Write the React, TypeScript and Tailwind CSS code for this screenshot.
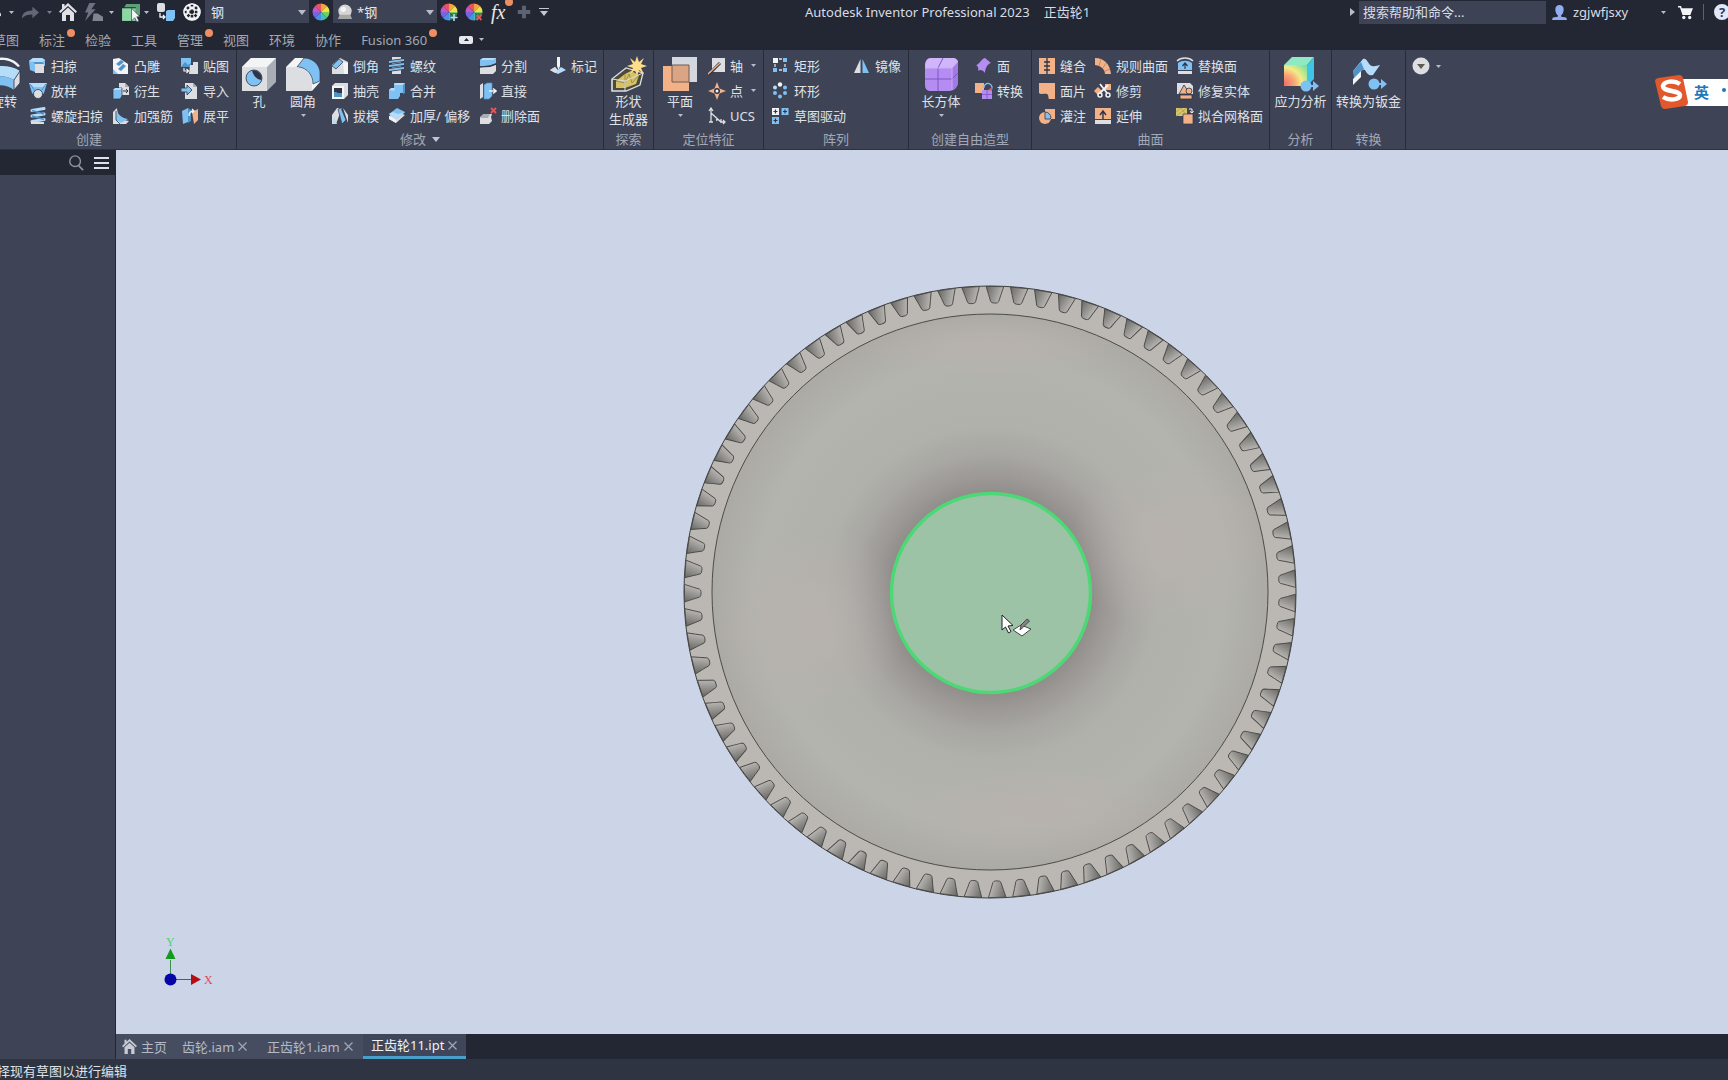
import React from "react";

type IconProps = { size?: number };
type Draw = React.ReactNode;

const B = "#7fc1f2";
const L = "#b5dcf8";
const D = "#4f93c9";
const G = "#dcdee2";
const W = "#f3f4f6";
const S = "#a9adb6";
const O = "#f3b187";
const P = "#b48cf2";
const K = "#2f3546";

function Svg({ children, size = 18, box = 18 }: { children: Draw; size?: number; box?: number }) {
  return (
    <svg width={size} height={size} viewBox={`0 0 ${box} ${box}`} fill="none" className="shrink-0" aria-hidden="true">
      {children}
    </svg>
  );
}

function Caret({ color = "#b9bdc8", wide = false }: { color?: string; wide?: boolean }) {
  return wide ? (
    <svg width="8" height="5" viewBox="0 0 8 5" className="shrink-0" aria-hidden="true">
      <path d="M0 0h8L4 5z" fill={color} />
    </svg>
  ) : (
    <svg width="5" height="3" viewBox="0 0 5 3" className="shrink-0" aria-hidden="true">
      <path d="M0 0h5L2.500 3z" fill={color} />
    </svg>
  );
}

/* ---------- small ribbon icons (18 x 18) ---------- */

const small: Record<string, Draw> = {
  sweep: (
    <>
      <path d="M0 4l4-3h9l3 2v6H6v6l-5-2z" fill={B} />
      <path d="M0 4l4-3h9l3 2-3 2H5z" fill={L} />
      <path d="M6 7h9v9H6z" fill={G} />
      <path d="M6 7l-2-2h9l2 2z" fill={D} />
    </>
  ),
  loft: (
    <>
      <path d="M0 1h18l-3 10-6 6-6-6z" fill={B} />
      <path d="M0 1h18l-4 4H5z" fill={L} />
      <circle cx="9" cy="12" r="4.500" fill={G} stroke={K} strokeWidth=".8" />
      <path d="M1 2l5 7M17 2l-5 7" stroke={D} />
    </>
  ),
  coil: (
    <>
      <path d="M3 3.500l12-2M3 9l12-2M3 14.500l12-2" stroke={L} strokeWidth="3" strokeLinecap="round" />
      <path d="M3 3.500l12 3.500M3 9l12 3.500" stroke={D} strokeWidth="1.500" />
      <path d="M2 16h13" stroke={G} strokeWidth="2" />
    </>
  ),
  emboss: (
    <>
      <path d="M1 2l6-1 9 6v10H1z" fill={W} />
      <path d="M4 7l5-4 3 2-5 4zM6 12l5-5 3 2-5 5z" fill={D} />
      <path d="M1 12l5 5H1z" fill={B} />
    </>
  ),
  derive: (
    <>
      <path d="M7 1h6l4 4v8H7z" fill={G} />
      <path d="M13 1l4 4h-4z" fill={S} />
      <path d="M1 8l2-2h7v8l-2 3H1z" fill={B} stroke={K} strokeWidth=".7" />
      <path d="M1 8l2-2h7L8 8z" fill={L} />
      <path d="M11 9h5M14 7l2 2-2 2" stroke={K} />
    </>
  ),
  rib: (
    <>
      <path d="M1 5l4-4 1 11 11 2-3 3H1z" fill={G} />
      <path d="M5 3c1 5 5 8 11 9l-7 4-5-3z" fill={B} />
      <path d="M4 4v9l4 4" stroke={K} strokeWidth=".8" />
    </>
  ),
  decal: (
    <>
      <path d="M0 1h10v9H0z" fill={B} />
      <path d="M0 10l4-5 3 3 3-2v4z" fill={D} />
      <path d="M9 8h3V5h5v12H8z" fill={G} />
      <path d="M3 11v3h4M5.500 12l2 2-2 2" stroke={W} strokeWidth="1.200" />
    </>
  ),
  importer: (
    <>
      <path d="M4 1h8l4 4v12H4z" fill={G} />
      <path d="M12 1v4h4z" fill={S} />
      <path d="M0 6h6V3l5 5-5 5v-3H0z" fill={B} stroke={K} strokeWidth=".8" />
    </>
  ),
  unwrap: (
    <>
      <path d="M1 4l6-3v14l-5 2z" fill={B} />
      <path d="M7 1l3 2v11l-3 2z" fill={D} />
      <path d="M11 5l6-3v11l-4 4z" fill={O} />
      <path d="M8 9c0-4 2-5 5-5M11 2l2 2-2 2" stroke={W} strokeWidth="1.300" />
    </>
  ),
  chamfer: (
    <>
      <path d="M1 8l8-7 8 4v12H1z" fill={G} />
      <path d="M1 9l7-7 4 3-7 7z" fill={B} stroke={K} strokeWidth=".7" />
      <path d="M12 5l5 1v11h-4z" fill={W} />
    </>
  ),
  shell: (
    <>
      <path d="M1 4l3-3h13v12l-4 4H1z" fill={G} />
      <path d="M1 4h12v13H1z" fill={W} />
      <path d="M3 6h8v9H3z" fill={K} />
      <path d="M3 15v-5h4l1 1h3v4z" fill={D} />
      <path d="M6 6h5v5H6z" fill={K} />
    </>
  ),
  draft: (
    <>
      <path d="M1 8l5-7h5L5 17H1z" fill={G} />
      <path d="M7 2l3-1 5 12-4 4z" fill={B} stroke={K} strokeWidth=".7" />
      <path d="M12 1l5 7v8z" fill={G} />
      <path d="M3 10l3 7H1z" fill={L} />
    </>
  ),
  thread: (
    <>
      <path d="M4 0h9v17H4z" fill={G} />
      <path d="M1 5l15-2M1 9l15-2M1 13l15-2" stroke={K} strokeWidth="3.400" />
      <path d="M1 5l15-2M1 9l15-2M1 13l15-2" stroke={B} strokeWidth="1.900" />
    </>
  ),
  combine: (
    <>
      <path d="M6 1h11v10h-5v3l-2 3H1V8l3-2h2z" fill={B} />
      <path d="M6 3l2-2h9l-2 2zM1 8l2-2h4l-1 3z" fill={L} />
      <path d="M15 3l2-2v10l-2 1z" fill={D} />
    </>
  ),
  thicken: (
    <>
      <path d="M1 9l8-4 8 3-9 8-7-4z" fill={G} />
      <path d="M1 7l8-6 8 4-8 7z" fill={B} />
      <path d="M1 7l4-2 5 2 7-2-8 7z" fill={L} />
      <path d="M1 12l7 4v-3L1 9z" fill={W} />
    </>
  ),
  split: (
    <>
      <path d="M1 10l3-2h13v6l-3 3H1z" fill={G} />
      <path d="M1 3l3-2h13v5l-3 3H1z" fill={B} />
      <path d="M1 3l3-2h13l-3 2z" fill={L} />
      <path d="M0 10c6-1 9 1 17-3" stroke={K} strokeWidth="1.400" />
    </>
  ),
  direct: (
    <>
      <path d="M1 3l3-2v14l-3 2z" fill={G} />
      <path d="M5 3l3-2h5v13l-3 3H5z" fill={B} stroke={D} strokeWidth=".7" />
      <path d="M10 9h6M14 6.500L17 9l-3 2.500" stroke={W} strokeWidth="1.500" />
    </>
  ),
  deleteFace: (
    <>
      <path d="M1 10l4-3h8l-1 3 1 4-3 3H1z" fill={G} />
      <path d="M1 11l3-4h7l-2 4z" fill={S} />
      <path d="M12 1l5 5M17 1l-5 5" stroke="#e0575c" strokeWidth="1.900" />
    </>
  ),
  mark: (
    <>
      <path d="M8 0h3v9l-1.500 4L8 9z" fill={W} />
      <path d="M1 13l5-3 3 3 3-3 5 3-8 4z" fill={L} />
      <path d="M1 13l5-3 3 4-3 2z" fill={G} />
    </>
  ),
  axis: (
    <>
      <path d="M4 1h13v14H4z" fill={G} />
      <path d="M1 17L12 6" stroke={K} strokeWidth="3" />
      <path d="M0 17L12 6" stroke={O} strokeWidth="1.400" />
    </>
  ),
  point: (
    <>
      <path d="M9 0l2.500 6.500L18 9l-6.500 2.500L9 18l-2.500-6.500L0 9l6.500-2.500z" fill={O} />
      <circle cx="9" cy="9" r="3" fill={K} />
      <circle cx="9" cy="9" r="1.500" fill={W} />
    </>
  ),
  ucs: (
    <path d="M3 15V2M1 4l2-3 2 3M3 6l10 9h4M15 13l2 2-2 2M1 15h4M3 8v7M8 10l1 4M13 12v4" stroke={G} strokeWidth="1.300" />
  ),
  rect: (
    <>
      <path d="M1 1h5v5H1z" fill={W} />
      <path d="M11 1h4v4h-4zM1 11h4v4H1zM11 11h4v4h-4z" fill={B} />
      <path d="M7 2h3M7 13h3M3 7v3M13 7v3" stroke={G} strokeWidth="1.300" />
    </>
  ),
  ring: (
    <>
      <circle cx="8" cy="2.500" r="2.200" fill={W} />
      <circle cx="13" cy="5.500" r="2" fill={B} />
      <circle cx="13" cy="11" r="2" fill={B} />
      <circle cx="8" cy="14.500" r="2" fill={B} />
      <circle cx="3" cy="11" r="2" fill={B} />
      <circle cx="3" cy="5.500" r="2" fill={L} />
    </>
  ),
  sketchDriven: (
    <>
      <path d="M0 1h7v7H0z" fill={W} />
      <path d="M9.500 1h7v7h-7zM0 10h7v7H0z" fill={B} />
      <path d="M3.500 2.500v4M1.500 4.500h4M13 2.500v4M11 4.500h4M3.500 11.500v4M1.500 13.500h4" stroke={K} strokeWidth="1.200" />
    </>
  ),
  mirror: (
    <>
      <path d="M7.500 2v14H1z" fill={G} />
      <path d="M9.500 2v14H16z" fill={B} />
    </>
  ),
  face: (
    <>
      <path d="M1 8c3 0 5-6 9-7l6 5c-4 1-6 6-6 10-2-3-5-4-7-2 1-2 0-5-2-6z" fill={P} />
    </>
  ),
  convert: (
    <>
      <path d="M0 1h9v10H0z" fill={O} />
      <path d="M7 8h10v9H7z" fill={P} />
      <path d="M12 8v9M7 12.500h10" stroke="#8560c8" />
      <path d="M9 6a4 4 0 117 2" stroke={B} strokeWidth="1.300" />
      <path d="M13 8l4-3v4z" fill="#e0575c" />
    </>
  ),
  stitch: (
    <>
      <path d="M1 1h16v16H1z" fill={O} />
      <path d="M9 1v16M6 5h6M6 9h6M6 13h6" stroke={K} strokeWidth="1.300" />
    </>
  ),
  patch: <path d="M1 1h16v16h-6c-1-1 0-4-2-5s-6 1-8-1z" fill={O} />,
  sculpt: (
    <>
      <path d="M7 2h10v10H7z" fill={O} />
      <circle cx="7" cy="11" r="6" fill={O} />
      <path d="M7 5a6 6 0 016 6l-1 1H7z" fill={B} stroke={K} strokeWidth=".8" />
    </>
  ),
  ruled: (
    <>
      <path d="M1 1c9 0 15 6 16 16h-6c0-4-3-8-10-9z" fill={O} />
      <path d="M7 2L5 9M12 6l-3 5M16 12l-5 2" stroke="#c98a5f" />
    </>
  ),
  trim: (
    <>
      <path d="M0 9l4-4 4 4-4 4zM11 2h6v6h-6z" fill={O} />
      <path d="M6 2l7 9M14 3L6 11" stroke={W} strokeWidth="1.800" />
      <circle cx="6" cy="13" r="2" stroke={W} strokeWidth="1.500" />
      <circle cx="14" cy="13" r="2" stroke={W} strokeWidth="1.500" />
    </>
  ),
  extend: (
    <>
      <path d="M1 1h16v11H1z" fill={O} />
      <path d="M1 13h16v4H1z" fill={G} />
      <path d="M9 12V5M6 8l3-4 3 4" stroke={K} strokeWidth="1.400" />
    </>
  ),
  replace: (
    <>
      <path d="M1 4c4-4 12-4 16 0" stroke={G} strokeWidth="1.500" />
      <path d="M2 6c4-3 10-3 14 0v7H2z" fill={B} />
      <path d="M2 14h14v3H2z" fill={G} />
      <path d="M9 12V7M6.500 9L9 6l2.500 3" stroke={K} strokeWidth="1.200" />
    </>
  ),
  repair: (
    <>
      <path d="M1 1h13l3 3v8H1z" fill={G} />
      <path d="M8 3l6 9H3zM4 13h12v4H4z" fill={O} stroke={K} strokeWidth=".8" />
      <circle cx="13" cy="9" r="3" fill={O} stroke={K} strokeWidth=".8" />
    </>
  ),
  fitMesh: (
    <>
      <path d="M0 1h11v8H0z" fill="#d9c66b" />
      <path d="M0 5l5-4 6 8M0 9l11-8" stroke="#a89850" strokeWidth=".7" />
      <path d="M7 7h10v10H7z" fill={O} stroke={K} strokeWidth=".7" />
      <path d="M13 2h3v4M14 4.500L16 6l1.500-2" stroke={W} />
    </>
  ),
};

/* ---------- large ribbon icons (36 x 36) ---------- */

const large: Record<string, Draw> = {
  revolve: (
    <>
      <path d="M2 5C14-1 27 1 34 10l-2 1C25 3 14 2 3 7z" fill={W} />
      <path d="M0 14c10-6 25-5 34 1l-6 9c-6-4-16-5-24-2z" fill={L} />
      <path d="M4 22c8-3 18-2 24 2v10c-6-5-16-6-24-3z" fill={B} />
      <path d="M34 15v12l-6 7V24z" fill={G} stroke={K} strokeWidth=".8" />
    </>
  ),
  hole: (
    <>
      <path d="M1 11l9-9h25v24l-9 9H1z" fill={S} />
      <path d="M1 11l9-9h25l-9 9z" fill={W} />
      <path d="M1 11h25v24H1z" fill={G} />
      <circle cx="13" cy="22" r="8" fill={B} stroke={K} strokeWidth=".8" />
      <path d="M11 14.500a8 8 0 019.500 9.500c-5-1-8-4-9.500-9.500z" fill={K} />
    </>
  ),
  fillet: (
    <>
      <path d="M1 11l9-9h8c10 1 17 8 17 16v8l-8 9H1z" fill={W} />
      <path d="M1 11h9c10 0 17 7 17 16v8H1z" fill={G} />
      <path d="M19 2c9 0 16 7 16 15v8l-7 3c0-9-6-16-14-17-1-1-2 0-2 0z" fill={B} stroke={K} strokeWidth=".7" />
    </>
  ),
  shape: (
    <>
      <path d="M1 23l14-11 17 5-3 12-14 6H1z" fill="#4c4a3d" stroke={G} strokeWidth="1.300" />
      <path d="M5 25l9-7 6-3 8 4-3 9-11 4H5z" fill="#d7c166" />
      <path d="M5 25l9 2 4-9 3 9 7-8M14 18v13" stroke="#a08e42" />
      <path d="M1 23v12M1 23l13 2 18-8M14 25v10" stroke={G} />
      <path d="M26 0l2 6 5-4-3 6 6 2-6 2 3 6-5-4-2 6-2-6-5 4 3-6-6-2 6-2-3-6 5 4z" fill="#ffdc88" />
    </>
  ),
  plane: (
    <>
      <path d="M10 1h25v25H10z" fill="#d4d7dd" />
      <path d="M1 10h26v25H1z" fill={O} />
      <path d="M10 9h17v17H10z" fill="#dba583" stroke="#6f5c55" />
    </>
  ),
  box: (
    <>
      <path d="M8 2h21c4 0 6 2 6 5v19c0 5-4 9-9 9H8c-4 0-6-2-6-6V9c0-4 2-7 6-7z" fill={P} />
      <path d="M8 2h21c4 0 6 2 6 5l-6 5H2c0-6 2-10 6-10z" fill="#d1b5fb" />
      <path d="M29 12l6-6v20c0 4-3 7-6 8z" fill="#a27ae6" />
      <path d="M15 35V12l5-10M2 23h27l6-6" stroke="#7f56c4" />
      <path d="M29 12v22M2 12h27l5-6" stroke="#c9adf8" />
    </>
  ),
  stress: (
    <>
      <defs>
        <radialGradient id="stressFront" cx="0" cy=".9" r="1.300">
          <stop offset="0" stopColor="#f06a6a" />
          <stop offset=".35" stopColor="#f8a775" />
          <stop offset=".6" stopColor="#f5ec86" />
          <stop offset="1" stopColor="#6ee0a0" />
        </radialGradient>
      </defs>
      <path d="M1 9l8-8h22l-7 8z" fill="#8fe9c4" />
      <path d="M24 9l7-8v22l-7 7z" fill="#3fc3e6" />
      <path d="M1 9h23v21H1z" fill="url(#stressFront)" />
      <circle cx="23" cy="30" r="5.500" fill={B} />
      <path d="M27 30h4" stroke={B} strokeWidth="2" />
      <path d="M30 25l6 5-6 5z" fill={B} />
    </>
  ),
  sheet: (
    <>
      <path d="M2 15L12 3c4-2 5 6 9 7 3 1 6-1 8-1l-7 10c-4 1-6-1-8-5-4-1-9 4-10 8z" fill={L} />
      <path d="M2 15l8-9 3 7-10 9z" fill={D} />
      <path d="M2 23l8-8v6l-8 8z" fill={W} />
      <circle cx="23" cy="28" r="5.500" fill={B} />
      <path d="M27 28h4" stroke={B} strokeWidth="2" />
      <path d="M30 23l6 5-6 5z" fill={B} />
    </>
  ),
};

/* ---------- ribbon parts ---------- */

type SmallItem = { icon: string; label: string; caret?: boolean };

function Small({ icon, label, caret }: SmallItem) {
  return (
    <button type="button" className="flex h-[25px] items-center gap-1 whitespace-nowrap text-[13px] leading-4 text-[#dfe1e8]">
      <Svg>{small[icon]}</Svg>
      <span>{label}</span>
      {caret && (
        <span className="ml-1 flex">
          <Caret />
        </span>
      )}
    </button>
  );
}

function Column({ items, className = "" }: { items: SmallItem[]; className?: string }) {
  return (
    <div className={"flex shrink-0 flex-col items-start " + className}>
      {items.map((i) => (
        <Small key={i.label} {...i} />
      ))}
    </div>
  );
}

function Big({ icon, lines, caret, className = "w-11" }: { icon: string; lines: string[]; caret?: boolean; className?: string }) {
  return (
    <button type="button" className={"flex shrink-0 flex-col items-center pt-[3px] text-[13px] leading-[18px] whitespace-nowrap text-[#dfe1e8] " + className}>
      <Svg size={36} box={36}>
        {large[icon]}
      </Svg>
      {lines.map((l) => (
        <span key={l}>{l}</span>
      ))}
      {caret && (
        <span className="mt-1 flex">
          <Caret />
        </span>
      )}
    </button>
  );
}

function Panel({ title, children, className, caret }: { title: string; children: Draw; className: string; caret?: boolean }) {
  return (
    <section aria-label={title} className={"flex shrink-0 flex-col border-r border-[#262c3a] pt-[3px] " + className}>
      <div className="flex h-[76px]">{children}</div>
      <h2 className="flex h-5 items-center justify-center gap-1.5 text-[13px] leading-4 text-[#a3a8b6]">
        {title}
        {caret && <Caret wide color="#c3c7d2" />}
      </h2>
    </section>
  );
}

function Ribbon() {
  return (
    <div className="flex h-[100px] shrink-0 overflow-hidden border-b border-[#2b3140] bg-[#3e4456]">
      <Panel title="创建" className="-ml-[58px] w-[295px]">
        <Big icon="revolve" lines={["旋转"]} className="ml-10 w-11" />
        <Column className="ml-[3px] w-[83px]" items={[{ icon: "sweep", label: "扫掠" }, { icon: "loft", label: "放样" }, { icon: "coil", label: "螺旋扫掠" }]} />
        <Column className="w-[69px]" items={[{ icon: "emboss", label: "凸雕" }, { icon: "derive", label: "衍生" }, { icon: "rib", label: "加强筋" }]} />
        <Column items={[{ icon: "decal", label: "贴图" }, { icon: "importer", label: "导入" }, { icon: "unwrap", label: "展平" }]} />
      </Panel>
      <Panel title="修改" className="w-[367px]" caret>
        <Big icon="hole" lines={["孔"]} />
        <Big icon="fillet" lines={["圆角"]} caret />
        <Column className="ml-1.5 w-[57px]" items={[{ icon: "chamfer", label: "倒角" }, { icon: "shell", label: "抽壳" }, { icon: "draft", label: "拔模" }]} />
        <Column className="w-[91px]" items={[{ icon: "thread", label: "螺纹" }, { icon: "combine", label: "合并" }, { icon: "thicken", label: "加厚/ 偏移" }]} />
        <Column className="w-[70px]" items={[{ icon: "split", label: "分割" }, { icon: "direct", label: "直接" }, { icon: "deleteFace", label: "删除面" }]} />
        <Column items={[{ icon: "mark", label: "标记" }]} />
      </Panel>
      <Panel title="探索" className="w-[50px]">
        <Big icon="shape" lines={["形状", "生成器"]} className="w-full" />
      </Panel>
      <Panel title="定位特征" className="w-[110px]">
        <Big icon="plane" lines={["平面"]} caret className="ml-1 w-11" />
        <Column className="ml-1.5" items={[{ icon: "axis", label: "轴", caret: true }, { icon: "point", label: "点", caret: true }, { icon: "ucs", label: "UCS" }]} />
      </Panel>
      <Panel title="阵列" className="w-[145px]">
        <Column className="ml-2 w-[81px]" items={[{ icon: "rect", label: "矩形" }, { icon: "ring", label: "环形" }, { icon: "sketchDriven", label: "草图驱动" }]} />
        <Column items={[{ icon: "mirror", label: "镜像" }]} />
      </Panel>
      <Panel title="创建自由造型" className="w-[123px]">
        <Big icon="box" lines={["长方体"]} caret className="ml-2.5 w-11" />
        <Column className="ml-3" items={[{ icon: "face", label: "面" }, { icon: "convert", label: "转换" }]} />
      </Panel>
      <Panel title="曲面" className="w-[238px]">
        <Column className="ml-1.5 w-[56px]" items={[{ icon: "stitch", label: "缝合" }, { icon: "patch", label: "面片" }, { icon: "sculpt", label: "灌注" }]} />
        <Column className="w-[82px]" items={[{ icon: "ruled", label: "规则曲面" }, { icon: "trim", label: "修剪" }, { icon: "extend", label: "延伸" }]} />
        <Column items={[{ icon: "replace", label: "替换面" }, { icon: "repair", label: "修复实体" }, { icon: "fitMesh", label: "拟合网格面" }]} />
      </Panel>
      <Panel title="分析" className="w-[62px]">
        <Big icon="stress" lines={["应力分析"]} className="w-full" />
      </Panel>
      <Panel title="转换" className="w-[74px]">
        <Big icon="sheet" lines={["转换为钣金"]} className="w-full" />
      </Panel>
      <div className="flex h-8 items-center pl-1.5">
        <button type="button" aria-label="显示面板" className="flex items-center gap-1.5">
          <Svg>
            <circle cx="9" cy="9" r="8.500" fill={G} />
            <path d="M5 7h8l-4 5z" fill="#5d5a55" />
          </Svg>
          <Caret />
        </button>
      </div>
    </div>
  );
}

/* ---------- title bar ---------- */

function ColorWheel({ children }: { children?: Draw }) {
  const hues = ["#f2a63b", "#f4dd4f", "#72cf5b", "#3fc3b0", "#4a90e8", "#7a63e0", "#c456c8", "#e8545d"];
  return (
    <Svg>
      {hues.map((c, i) => {
        const a = ((i * 45 - 90) * Math.PI) / 180;
        const b = ((i * 45 - 44) * Math.PI) / 180;
        return <path key={c} fill={c} d={`M9 9L${9 + 8.5 * Math.cos(a)} ${9 + 8.5 * Math.sin(a)}A8.500 8.500 0 0 1 ${9 + 8.5 * Math.cos(b)} ${9 + 8.5 * Math.sin(b)}z`} />;
      })}
      {children}
    </Svg>
  );
}

function Tool({ label, children, className = "" }: { label: string; children: Draw; className?: string }) {
  return (
    <button type="button" aria-label={label} title={label} className={"flex shrink-0 items-center " + className}>
      {children}
    </button>
  );
}

function Dot({ className }: { className: string }) {
  return <span className={"absolute size-2 rounded-full bg-[#ee8e63] " + className} />;
}

function Picker({ label, value, padding }: { label: string; value: string; padding: string }) {
  return (
    <div className="relative flex h-[23px] w-[104px] shrink-0 self-start bg-[#3d4355]">
      {padding === "pl-6" && (
        <span className="pointer-events-none absolute top-1 left-1">
          <Svg size={16}>
            <circle cx="9" cy="8" r="7.500" fill="#d5d5d5" />
            <path d="M3 12h12l2 5H1z" fill="#a7a7a7" />
            <circle cx="7" cy="6" r="3" fill="#f4f4f4" />
          </Svg>
        </span>
      )}
      <select aria-label={label} defaultValue={value} className={"w-full appearance-none bg-transparent text-[13px] leading-[22px] text-[#e4e6ec] outline-none " + padding}>
        <option>{value}</option>
      </select>
      <span className="pointer-events-none absolute top-[10px] right-[3px]">
        <Caret wide />
      </span>
    </div>
  );
}

function HomeIcon({ size = 18, color = "#dfe1e6" }: IconProps & { color?: string }) {
  return (
    <Svg size={size}>
      <path d="M9 0l9 8.500-1.500 1.500L9 3 1.500 10 0 8.500l3-2.800V1h2.500v2.300z" fill={color} />
      <path d="M3 10l6-5.500 6 5.500v8h-4v-6H7v6H3z" fill={color} />
    </Svg>
  );
}

function TitleBar() {
  return (
    <header className="flex h-[27px] shrink-0 items-center pb-[3px] text-[13px] leading-4 text-[#d9dce4]">
      <Tool label="撤消" className="-ml-3.5 w-7 justify-between">
        <Svg size={16}>
          <path d="M0 8l7-6v4c7 0 10 3 10 8-3-3-5-4-10-4v4z" fill={W} />
        </Svg>
        <Caret />
      </Tool>
      <Tool label="恢复" className="ml-2 w-[30px] justify-between">
        <Svg size={17}>
          <path d="M18 9l-7-6v4C4 7 0 10 0 15c3-3 6-4 11-4v4z" fill="#626877" />
        </Svg>
        <Caret color="#7a7f8d" />
      </Tool>
      <Tool label="主页" className="ml-[7px]">
        <HomeIcon />
      </Tool>
      <Tool label="更新" className="ml-[7px] w-[30px] justify-between">
        <Svg size={19}>
          <path d="M5 0h6L7 6h4L1 17l3-8H1z" fill="#6d7280" />
          <path d="M9 10h4l5 3v4H8z" fill="#7f8490" />
        </Svg>
        <Caret />
      </Tool>
      <Tool label="选择" className="ml-[7px] w-[28px] justify-between">
        <Svg size={19}>
          <path d="M5 1h13v10l-4 4V4H3z" fill="#5e9f78" />
          <path d="M1 5h13v12H1z" fill="#8bd6a2" />
          <path d="M10 5v12l3-3 2 4 2-1-2-4h3z" fill={W} stroke={K} strokeWidth=".6" />
        </Svg>
        <Caret />
      </Tool>
      <Tool label="透明度" className="ml-2">
        <Svg size={18}>
          <rect x="0" y="0" width="8" height="9" rx="2" fill={G} />
          <path d="M9 8l2-1h7v8l-2 3H9z" fill={B} />
          <path d="M3 10v4h5M6 12l2 2-2 2" stroke={W} strokeWidth="1.300" />
        </Svg>
      </Tool>
      <Tool label="材料" className="ml-2">
        <Svg size={18}>
          <circle cx="9" cy="9" r="8.500" fill={W} />
          <path d="M9 1v16M1 9h16M4 4l10 10M14 4L4 14" stroke="#20242e" strokeWidth="2.600" strokeDasharray="2.600 2.800" />
          <circle cx="9" cy="9" r="2" fill="#20242e" />
          <circle cx="9" cy="9" r="8" stroke={W} strokeWidth="1.500" />
        </Svg>
      </Tool>
      <span className="ml-1 flex self-start">
        <Picker label="材料" value="钢" padding="pl-1.5" />
      </span>
      <Tool label="外观" className="ml-[3px]">
        <ColorWheel />
      </Tool>
      <span className="ml-[3px] flex self-start">
        <Picker label="外观" value="*钢" padding="pl-6" />
      </span>
      <Tool label="调整" className="ml-[3px]">
        <ColorWheel>
          <path d="M10 10h8v8h-8z" fill="#222733" opacity=".5" />
          <path d="M14 11v7M10.500 14.500h7" stroke={L} strokeWidth="1.600" />
        </ColorWheel>
      </Tool>
      <Tool label="清除" className="ml-[7px]">
        <ColorWheel>
          <path d="M10 10h8v8h-8z" fill="#222733" opacity=".5" />
          <path d="M11.500 12l5 5M16.500 12l-5 5" stroke="#e0575c" strokeWidth="1.800" />
        </ColorWheel>
      </Tool>
      <Tool label="参数" className="relative ml-2 w-5 text-[20px] leading-5 text-[#e4e6ec] italic">
        <span className="font-['Liberation_Serif',serif]">fx</span>
        <Dot className="-top-1 -right-0.5" />
      </Tool>
      <Tool label="添加" className="ml-1.5">
        <Svg size={14}>
          <path d="M9 1v16M1 9h16" stroke="#5d6372" strokeWidth="5" />
        </Svg>
      </Tool>
      <Tool label="自定义快速访问工具栏" className="ml-2 flex-col gap-0.5">
        <span className="h-px w-2.5 bg-[#c3c7d2]" />
        <Caret wide color="#c3c7d2" />
      </Tool>
      <h1 className="ml-64 flex gap-3.5 font-normal whitespace-nowrap">
        <span>Autodesk Inventor Professional 2023</span>
        <span>正齿轮1</span>
      </h1>
      <div className="ml-auto flex items-center self-stretch">
        <svg width="5" height="8" viewBox="0 0 5 8" aria-hidden="true">
          <path d="M0 0l5 4-5 4z" fill="#b9bdc8" />
        </svg>
        <input aria-label="搜索帮助和命令" placeholder="搜索帮助和命令..." className="ml-1 h-[23px] w-[187px] bg-[#3d4355] px-1 text-[13px] outline-none placeholder:text-[#d9dce4]" />
        <button type="button" className="ml-1.5 flex w-[114px] items-center gap-1.5">
          <Svg size={15}>
            <path d="M9 0c3 0 5 2 5 5 0 4-2 7-3 7v2l6 1 1 3H0l1-3 6-1v-2c-1 0-3-3-3-7 0-3 2-5 5-5z" fill="#93adf3" />
          </Svg>
          <span>zgjwfjsxy</span>
          <span className="ml-auto flex">
            <Caret />
          </span>
        </button>
        <Tool label="购物车" className="ml-3">
          <Svg size={15}>
            <path d="M0 2h3l3 9h9" stroke={W} strokeWidth="1.800" />
            <path d="M4 4h14l-3 7H6z" fill={W} />
            <circle cx="7" cy="15" r="2" fill={W} />
            <circle cx="14" cy="15" r="2" fill={W} />
          </Svg>
        </Tool>
        <span className="ml-2.5 h-4 w-px bg-[#5b6170]" />
        <Tool label="帮助" className="-mr-0.5 ml-2.5 size-4 justify-center rounded-full bg-[#e3e8f6] text-[13px] font-bold text-[#2a3a6c]">
          ?
        </Tool>
      </div>
    </header>
  );
}

const tabs: { label: string; dot?: boolean }[] = [
  { label: "草图" },
  { label: "标注", dot: true },
  { label: "检验" },
  { label: "工具" },
  { label: "管理", dot: true },
  { label: "视图" },
  { label: "环境" },
  { label: "协作" },
  { label: "Fusion 360", dot: true },
];

function RibbonTabs() {
  return (
    <nav aria-label="功能区" className="-ml-[7px] flex h-[23px] shrink-0 items-center gap-5 pt-0.5 text-[13px] leading-4 text-[#a2a7b5]">
      {tabs.map((t) => (
        <button type="button" key={t.label} className="relative shrink-0 whitespace-nowrap">
          {t.label}
          {t.dot && <Dot className="-top-[3px] -right-2.5" />}
        </button>
      ))}
      <button type="button" aria-label="最小化功能区" className="ml-3 flex items-center gap-1.5">
        <span className="flex h-2 w-3.5 items-center justify-center rounded-xs bg-[#e6e8ee]">
          <svg width="5" height="3" viewBox="0 0 5 3" aria-hidden="true">
            <path d="M0 3h5L2.500 0z" fill="#222733" />
          </svg>
        </span>
        <Caret />
      </button>
    </nav>
  );
}

/* ---------- model view ---------- */

const TEETH = 79;

function Gear() {
  return (
    <svg width="616" height="616" viewBox="-308 -308 616 616" className="shrink-0" role="img" aria-label="正齿轮">
      <defs>
        <linearGradient id="gap" x1="0" y1=".2" x2="1" y2=".5">
          <stop offset="0" stopColor="#6a6b68" />
          <stop offset=".55" stopColor="#9c9a97" />
          <stop offset="1" stopColor="#c2bfbb" />
        </linearGradient>
        <radialGradient id="disc" gradientUnits="userSpaceOnUse" cx="1" cy="1" r="278">
          <stop offset=".36" stopColor="#918d8b" />
          <stop offset=".42" stopColor="#9c9996" />
          <stop offset=".5" stopColor="#a8a7a3" />
          <stop offset=".6" stopColor="#b0b1ab" />
          <stop offset=".84" stopColor="#b3b4ae" />
          <stop offset="1" stopColor="#acaaa5" />
        </radialGradient>
        <radialGradient id="warm">
          <stop offset="0" stopColor="#b9b2af" stopOpacity=".9" />
          <stop offset="1" stopColor="#b9b2af" stopOpacity="0" />
        </radialGradient>
      </defs>
      <circle r="306" fill="#bbb7b3" stroke="#3f403f" />
      {Array.from({ length: TEETH }, (_, i) => (
        <path
          key={i}
          d="M-8.800-305.500Q-6-297-4-290.500Q-3-289-1-289H1.500Q3-289 4-290.500Q6-297 8.800-305.500Z"
          fill="url(#gap)"
          stroke="#484847"
          strokeWidth=".9"
          transform={`rotate(${0.92 + (i * 360) / TEETH})`}
        />
      ))}
      <circle r="278" fill="url(#disc)" />
      <ellipse cx="180" cy="-50" rx="98" ry="90" fill="url(#warm)" />
      <ellipse cx="-180" cy="30" rx="95" ry="100" fill="url(#warm)" />
      <ellipse cx="50" cy="220" rx="150" ry="50" fill="url(#warm)" />
      <ellipse cx="0" cy="-245" rx="130" ry="32" fill="url(#warm)" />
      <circle r="278" stroke="#4b4c4a" fill="none" />
      <circle cx="1" cy="1" r="99.500" fill="#9dc3a7" stroke="#4cd975" strokeWidth="3.500" />
      <path d="M12 23v15l3.500-3 3 6 2.500-1.500-3-5.500 5-.5z" fill="#fff" stroke="#222" />
      <path d="M23 38l8-5 10 4-9 7z" fill="#fff" stroke="#444" />
      <path d="M30 38l1-5 6-6 2.500 2-6 6z" fill="#8a8085" stroke="#333" strokeWidth=".8" />
    </svg>
  );
}

function AxisTriad() {
  return (
    <svg width="60" height="66" viewBox="0 -6 60 66" className="absolute bottom-[34px] left-11" aria-label="坐标轴">
      <path d="M10.500 39V20" stroke="#3f8f4d" />
      <path d="M10.500 8.500l5 10.500h-10z" fill="#149a1d" />
      <path d="M11 39.500h22" stroke="#a03c3c" />
      <path d="M31 34l10 5.500L31 45z" fill="#b80d10" />
      <circle cx="10.500" cy="39.500" r="6" fill="#0606a8" />
      <text x="44" y="44" fontSize="12" fill="#e0485a" className="font-['Liberation_Serif',serif]">
        X
      </text>
      <text x="6" y="6" fontSize="12" fill="#4fd26a" className="font-['Liberation_Serif',serif]">
        Y
      </text>
    </svg>
  );
}

/* ---------- document tabs ---------- */

function CloseIcon() {
  return (
    <svg width="9" height="9" viewBox="0 0 9 9" aria-hidden="true">
      <path d="M.5.500l8 8M8.500.500l-8 8" stroke="#a2a7b5" strokeWidth="1.200" />
    </svg>
  );
}

function DocTab({ name, active, className = "" }: { name: string; active?: boolean; className?: string }) {
  return (
    <div className={"flex items-center gap-1 " + (active ? "border-b-3 border-[#4a9fc8] bg-[#3f4659] text-[#f0f2f6] " : "bg-[#474d60] text-[#b5b9c6] ") + className}>
      <button type="button" className="whitespace-nowrap">
        {name}
      </button>
      <button type="button" aria-label={"关闭 " + name}>
        <CloseIcon />
      </button>
    </div>
  );
}

export default function App() {
  return (
    <div className="relative flex h-screen flex-col overflow-hidden bg-[#222733] font-['Noto_Sans','Noto_Sans_CJK_SC',sans-serif]">
      <TitleBar />
      <RibbonTabs />
      <Ribbon />
      <div className="flex min-h-0 flex-1">
        <aside className="flex w-[116px] shrink-0 flex-col border-r border-[#222733] bg-[#3e4456]">
          <div className="flex h-[25px] items-center justify-end gap-2.5 bg-[#222733] pr-1.5">
            <button type="button" aria-label="搜索">
              <Svg size={16}>
                <circle cx="8" cy="7" r="6" stroke="#8d92a0" strokeWidth="1.600" />
                <path d="M12 12l5 5" stroke="#8d92a0" strokeWidth="2" />
              </Svg>
            </button>
            <button type="button" aria-label="菜单" className="flex w-[15px] flex-col gap-[3px]">
              <span className="h-0.5 bg-[#dfe1e8]" />
              <span className="h-0.5 bg-[#dfe1e8]" />
              <span className="h-0.5 bg-[#dfe1e8]" />
            </button>
          </div>
        </aside>
        <div className="flex min-w-0 flex-1 flex-col">
          <main className="relative flex min-h-0 flex-1 items-center justify-center overflow-hidden bg-[#ccd5e8] pl-[136px]">
            <Gear />
            <AxisTriad />
          </main>
          <div className="flex h-[25px] shrink-0 text-[13px] leading-4">
            <button type="button" className="flex w-[62px] items-center gap-1 bg-[#474d60] pl-1.5 text-[#b5b9c6]">
              <HomeIcon size={15} color="#c6cad4" />
              主页
            </button>
            <DocTab name="齿轮.iam" className="w-[85px] pl-1" />
            <DocTab name="正齿轮1.iam" className="w-[100px] pl-1" />
            <DocTab name="正齿轮11.ipt" active className="w-[103px] pl-2" />
          </div>
        </div>
      </div>
      <footer className="flex h-[21px] shrink-0 items-center bg-[#2f3442] pt-0.5 text-[13px] leading-4 whitespace-nowrap text-[#dfe1e8]">
        <span className="-ml-4">选择现有草图以进行编辑</span>
      </footer>
      <div className="absolute top-[75px] right-0 flex items-center">
        <div className="relative z-10 -mr-2">
          <Svg size={34} box={34}>
            <path d="M1 6Q1 4 4 3L25 0q3 0 4 3l5 24q0 3-3 4L11 34q-3 0-4-3z" fill="#e2572b" />
            <path d="M26 9C20 5 10 6 9 11c0 6 16 4 17 9 0 5-11 6-17 2" stroke="#fff" strokeWidth="4.500" />
          </Svg>
        </div>
        <div className="flex h-[27px] w-12 items-center justify-between bg-white pr-0.5 pl-3.5 text-[15px] leading-5 font-bold text-[#1c77bd]">
          英<span className="mb-1 size-1 rounded-full bg-[#1c77bd]" />
        </div>
      </div>
    </div>
  );
}
